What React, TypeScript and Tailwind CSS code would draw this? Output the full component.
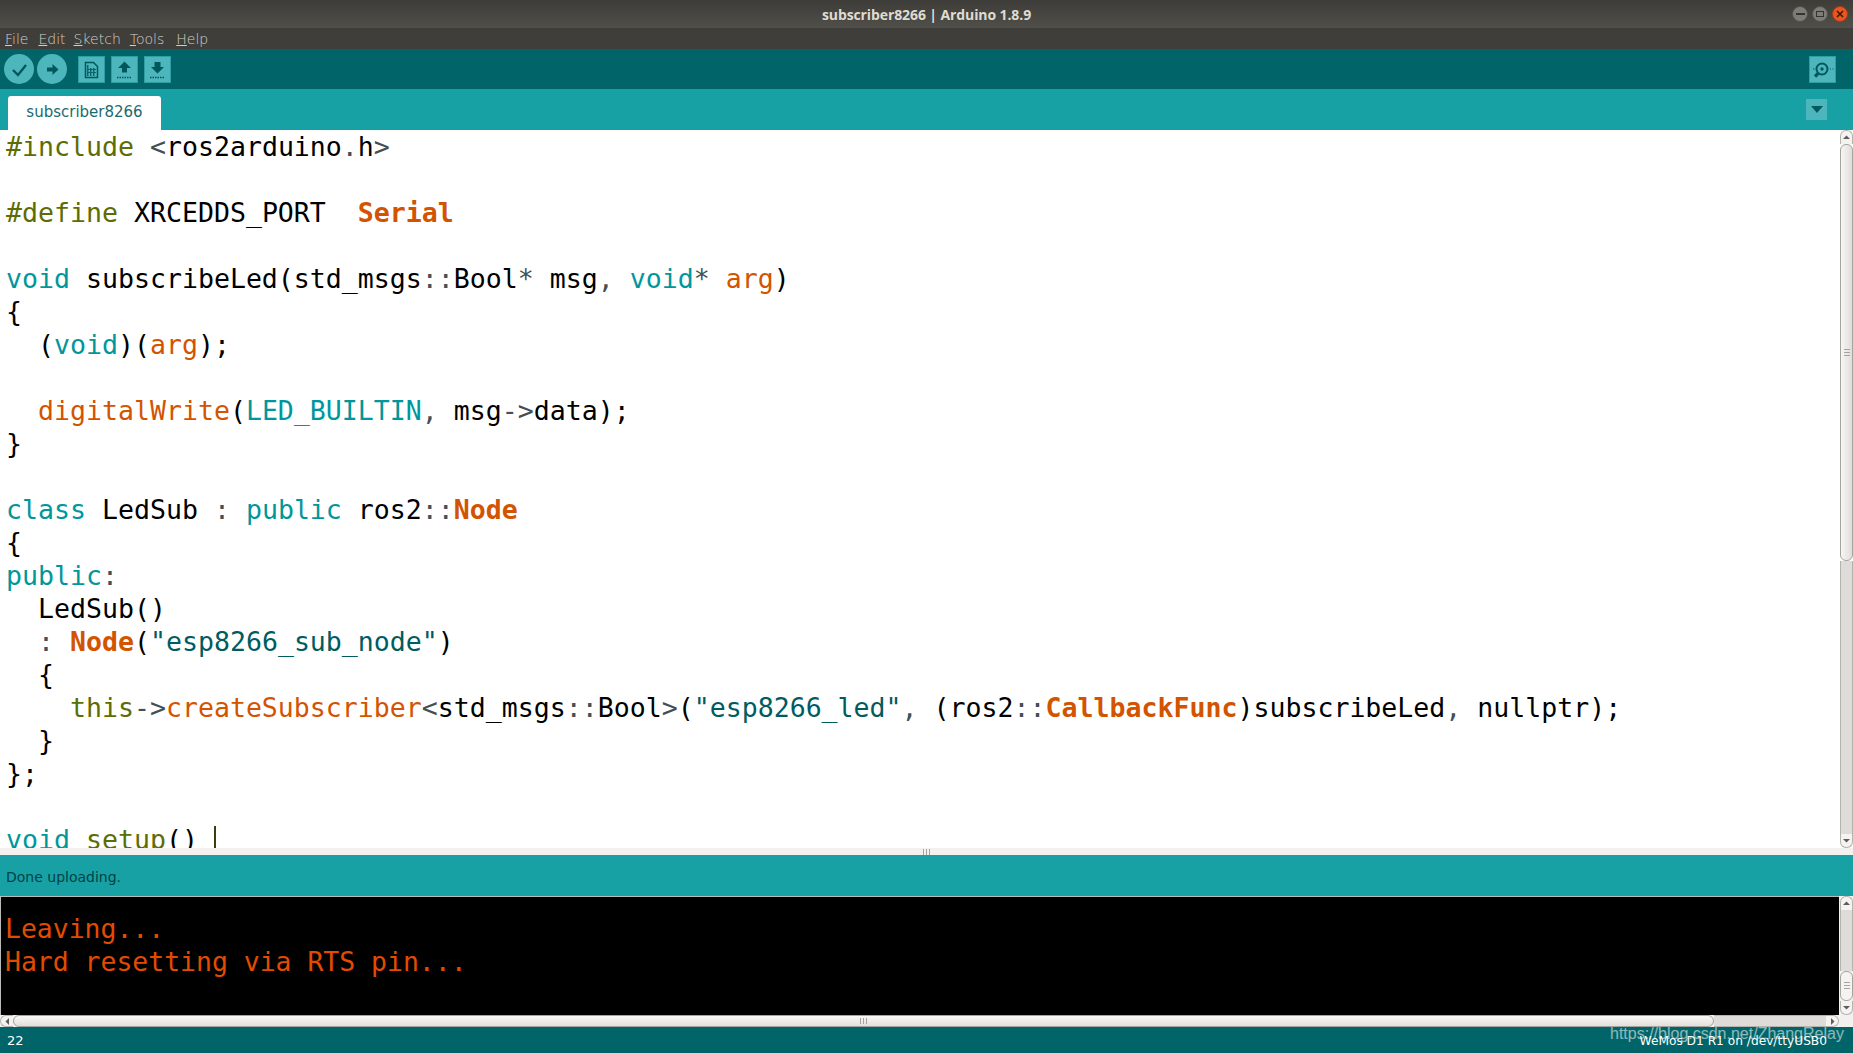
import { ReactNode } from 'react';

type Tok = [string, string?];

const K = 'text-[#00979c]';
const O = 'text-[#5e6d03]';
const R = 'text-[#d35400]';
const B = 'text-[#d35400] font-bold';
const S = 'text-[#005c5f]';
const P = 'text-[#434f54]';

const code: Tok[][] = [
  [['#include', O], [' '], ['<', P], ['ros2arduino'], ['.', P], ['h'], ['>', P]],
  [],
  [['#define', O], [' XRCEDDS_PORT  '], ['Serial', B]],
  [],
  [['void', K], [' subscribeLed(std_msgs'], ['::', P], ['Bool'], ['*', P], [' msg'], [',', P], [' '], ['void', K], ['*', P], [' '], ['arg', R], [')']],
  [['{']],
  [['  ('], ['void', K], [')('], ['arg', R], [');']],
  [],
  [['  '], ['digitalWrite', R], ['('], ['LED_BUILTIN', K], [',', P], [' msg'], ['->', P], ['data);']],
  [['}']],
  [],
  [['class', K], [' LedSub '], [':', P], [' '], ['public', K], [' ros2'], ['::', P], ['Node', B]],
  [['{']],
  [['public', K], [':', P]],
  [['  LedSub()']],
  [['  '], [':', P], [' '], ['Node', B], ['('], ['"esp8266_sub_node"', S], [')']],
  [['  {']],
  [['    '], ['this', O], ['->', P], ['createSubscriber', R], ['<', P], ['std_msgs'], ['::', P], ['Bool'], ['>', P], ['('], ['"esp8266_led"', S], [',', P], [' (ros2'], ['::', P], ['CallbackFunc', B], [')subscribeLed'], [',', P], [' nullptr);']],
  [['  }']],
  [['};']],
  [],
  [['void', K], [' '], ['setup', O], ['() ']],
];

function RoundButton({ children }: { children: ReactNode }) {
  return <div className="w-[30px] h-[30px] rounded-full bg-[#4db6bc]">{children}</div>;
}

function SquareButton({ children }: { children: ReactNode }) {
  return <div className="w-[27px] h-[27px] bg-[#4db6bc] border border-[#2f9ea3]">{children}</div>;
}

function ScrollButton({ dir, className }: { dir: 'up' | 'down' | 'left' | 'right'; className: string }) {
  const pts = { up: '1,6 4.5,2.500 8,6', down: '1,3 8,3 4.5,6.500', left: '6,1 6,8 2.500,4.5', right: '3,1 3,8 6.500,4.5' }[dir];
  return (
    <div className={`flex items-center justify-center border border-[#b5b3ae] bg-[#f4f3f1] ${className}`}>
      <svg width="9" height="9" viewBox="0 0 9 9"><polygon points={pts} fill="#5d5d5b" /></svg>
    </div>
  );
}

function Grip({ vertical }: { vertical?: boolean }) {
  const marks = [0, 3, 6];
  return (
    <svg width={vertical ? 6 : 8} height={vertical ? 8 : 6} viewBox={vertical ? '0 0 6 8' : '0 0 8 6'}>
      {marks.map((m) =>
        vertical ? <rect key={m} x="0" y={m} width="6" height="1" fill="#a5a39e" /> : <rect key={m} x={m} y="0" width="1" height="6" fill="#a5a39e" />
      )}
    </svg>
  );
}

export default function App() {
  return (
    <div className="w-[1853px] h-[1053px] overflow-hidden relative flex flex-col bg-white font-['Noto_Sans',sans-serif]">
      {/* Title bar */}
      <div className="h-[28px] shrink-0 relative flex items-center justify-center bg-gradient-to-b from-[#3d3c38] to-[#514f49]">
        <span className="text-[14px] font-bold text-[#dfdbd2] font-['Open_Sans',sans-serif] tracking-[-0.1px]">subscriber8266 | Arduino 1.8.9</span>
        <div className="absolute right-[5px] top-[6px] flex gap-[4px]">
          <div className="w-[16px] h-[16px] rounded-full bg-[#7e7c76] border border-[#55534e] flex items-center justify-center">
            <div className="w-[9px] h-[1.5px] bg-[#35342f]" />
          </div>
          <div className="w-[16px] h-[16px] rounded-full bg-[#7e7c76] border border-[#55534e] flex items-center justify-center">
            <div className="w-[8px] h-[6px] border border-[#35342f]" />
          </div>
          <div className="w-[16px] h-[16px] rounded-full bg-[#e95420] border border-[#a83c14] flex items-center justify-center">
            <svg width="8" height="8" viewBox="0 0 8 8"><path d="M1 1l6 6M7 1l-6 6" stroke="#3a1a0a" strokeWidth="1.6" /></svg>
          </div>
        </div>
      </div>

      {/* Menu */}
      <div className="h-[21px] shrink-0 flex items-center gap-[9px] pl-[5px] bg-[#3f3e3a] text-[14px] text-[#d3cfc7] leading-none font-['DejaVu_Sans',sans-serif] font-light">
        <span><u>F</u>ile</span>
        <span className="ml-[1px]"><u>E</u>dit</span>
        <span className="-ml-[1px]"><u>S</u>ketch</span>
        <span><u>T</u>ools</span>
        <span className="ml-[3px]"><u>H</u>elp</span>
      </div>

      {/* Toolbar */}
      <div className="h-[40px] shrink-0 flex items-center bg-[#006468] pl-[4px] pr-[17px]">
        <div className="flex items-center gap-[3px]">
          <RoundButton>
            <svg width="30" height="30" viewBox="0 0 30 30"><path d="M9 16l5 5 8-10" fill="none" stroke="#00585c" strokeWidth="2.4" /></svg>
          </RoundButton>
          <RoundButton>
            <svg width="30" height="30" viewBox="0 0 30 30"><path d="M10 13.500h5.500V10l6 5.500-6 5.500v-3.500H10z" fill="#00585c" /></svg>
          </RoundButton>
        </div>
        <div className="flex items-center gap-[6px] ml-[11px]">
          <SquareButton>
            <svg width="25" height="25" viewBox="0 0 25 25">
              <path d="M6.500 5.500h8l4 4v11h-12z" fill="#4db6bc" stroke="#00585c" strokeWidth="1.500" />
              <path d="M8 8h1.500v11H8zM11 11h1.500v8H11zM14 11h1.500v8H14zM8 12h9v1H8zM8 15h9v1H8z" fill="#00585c" opacity="0.85" />
            </svg>
          </SquareButton>
          <SquareButton>
            <svg width="25" height="25" viewBox="0 0 25 25">
              <path d="M12.500 4.500l6.500 6.500h-4v4.500h-5V11H6z" fill="#00585c" />
              <path d="M5 20.500h15" stroke="#00585c" strokeWidth="1.300" strokeDasharray="1.500 1" />
            </svg>
          </SquareButton>
          <SquareButton>
            <svg width="25" height="25" viewBox="0 0 25 25">
              <path d="M12.500 16.500L6 10h3.500V5h6v5H19z" fill="#00585c" />
              <path d="M5 20.500h15" stroke="#00585c" strokeWidth="1.300" strokeDasharray="1.500 1" />
            </svg>
          </SquareButton>
        </div>
        <div className="ml-auto">
          <SquareButton>
            <svg width="25" height="25" viewBox="0 0 25 25">
              <circle cx="12" cy="12" r="5.500" fill="none" stroke="#00585c" strokeWidth="2" />
              <circle cx="12" cy="12" r="1.700" fill="#00585c" />
              <path d="M8 16.500l-3 3" stroke="#00585c" strokeWidth="3.200" />
              <path d="M3 12h1.500M20 12h1M22.500 12h1" stroke="#00585c" strokeWidth="1" />
            </svg>
          </SquareButton>
        </div>
      </div>

      {/* Tab bar */}
      <div className="h-[41px] shrink-0 flex items-end bg-[#17a1a5] pl-[8px] pr-[26px] relative">
        <div className="w-[153px] h-[34px] bg-white rounded-t-[3px] flex items-center justify-center pb-[2px] text-[15px] text-[#1b6b6e] font-['DejaVu_Sans',sans-serif]">
          subscriber8266
        </div>
        <div className="ml-auto self-center w-[21px] h-[21px] bg-[#4db6bc] flex items-center justify-center">
          <svg width="12" height="7" viewBox="0 0 12 7"><path d="M0 0h12L6 7z" fill="#005c5f" /></svg>
        </div>
      </div>

      {/* Editor */}
      <div className="h-[718px] shrink-0 flex overflow-hidden bg-white">
        <pre className="flex-1 overflow-hidden pl-[6px] text-[26.57px] leading-[33px] text-black font-['DejaVu_Sans_Mono',monospace]">
          {code.map((line, i) => (
            <div key={i} className="h-[33px] whitespace-pre relative">
              {line.map(([text, cls], j) => (
                <span key={j} className={cls}>{text}</span>
              ))}
              {i === 21 && <span className="inline-block w-[2px] h-[28px] bg-[#3f3b0c] align-[-5px]" />}
            </div>
          ))}
        </pre>
        <div className="w-[13px] flex flex-col">
          <ScrollButton dir="up" className="h-[14px] rounded-t-[6px] border-b-0" />
          <div className="h-[417px] flex flex-col items-center justify-center rounded-[6px] border border-[#a5a39e] bg-gradient-to-r from-[#f7f6f5] to-[#dfdedb]">
            <Grip vertical />
          </div>
          <div className="flex-1 bg-[#dddcd9] border-x border-[#b5b3ae]" />
          <ScrollButton dir="down" className="h-[14px] rounded-b-[6px] border-t-0" />
        </div>
      </div>

      {/* Divider */}
      <div className="h-[7px] shrink-0 flex items-center justify-center bg-[#f2f1f0]"><Grip /></div>

      {/* Status */}
      <div className="h-[41px] shrink-0 flex items-center pl-[6px] pt-[4px] bg-[#17a1a5] text-[14px] text-[#004145] font-['DejaVu_Sans',sans-serif]">
        Done uploading.
      </div>

      {/* Console */}
      <div className="h-[119px] shrink-0 flex bg-[#f2f1f0]">
        <pre className="flex-1 border-t border-l border-[#bdbbb7] bg-black pt-[15px] pl-[4px] text-[26.45px] leading-[33px] text-[#e34c00] overflow-hidden font-['DejaVu_Sans_Mono',monospace]">
          <div>Leaving...</div>
          <div>Hard resetting via RTS pin...</div>
        </pre>
        <div className="w-[13px] ml-[1px] flex flex-col">
          <ScrollButton dir="up" className="h-[14px] rounded-t-[6px] border-b-0" />
          <div className="flex-1 bg-[#dddcd9] border-x border-[#b5b3ae]" />
          <div className="h-[30px] flex items-center justify-center rounded-[6px] border border-[#a5a39e] bg-[#f4f3f1]"><Grip vertical /></div>
          <ScrollButton dir="down" className="h-[14px] rounded-b-[6px] border-t-0" />
        </div>
      </div>

      {/* Horizontal scrollbar */}
      <div className="h-[12px] shrink-0 flex bg-[#f2f1f0] pr-[14px]">
        <ScrollButton dir="left" className="w-[13px] rounded-l-[6px] border-r-0" />
        <div className="w-[1701px] flex items-center justify-center rounded-[6px] border border-[#a5a39e] bg-gradient-to-b from-[#f9f8f7] to-[#e1e0dd]"><Grip /></div>
        <div className="flex-1 bg-[#dddcd9] border-y border-[#b5b3ae]" />
        <ScrollButton dir="right" className="w-[13px] rounded-r-[6px] border-l-0" />
      </div>

      {/* Footer */}
      <div className="flex-1 flex items-center justify-between bg-[#006468] pl-[7px] pr-[26px] pt-[1px] text-[13px] text-white font-['DejaVu_Sans',sans-serif]">
        <span>22</span>
        <span className="pt-[2px] text-[12.2px]">WeMos D1 R1 on /dev/ttyUSB0</span>
      </div>

      {/* Watermark */}
      <div className="absolute left-[1610px] top-[1024px] text-[16px] leading-[20px] text-white/55 font-['Liberation_Sans',sans-serif]">
        https://blog.csdn.net/ZhangRelay
      </div>
    </div>
  );
}
